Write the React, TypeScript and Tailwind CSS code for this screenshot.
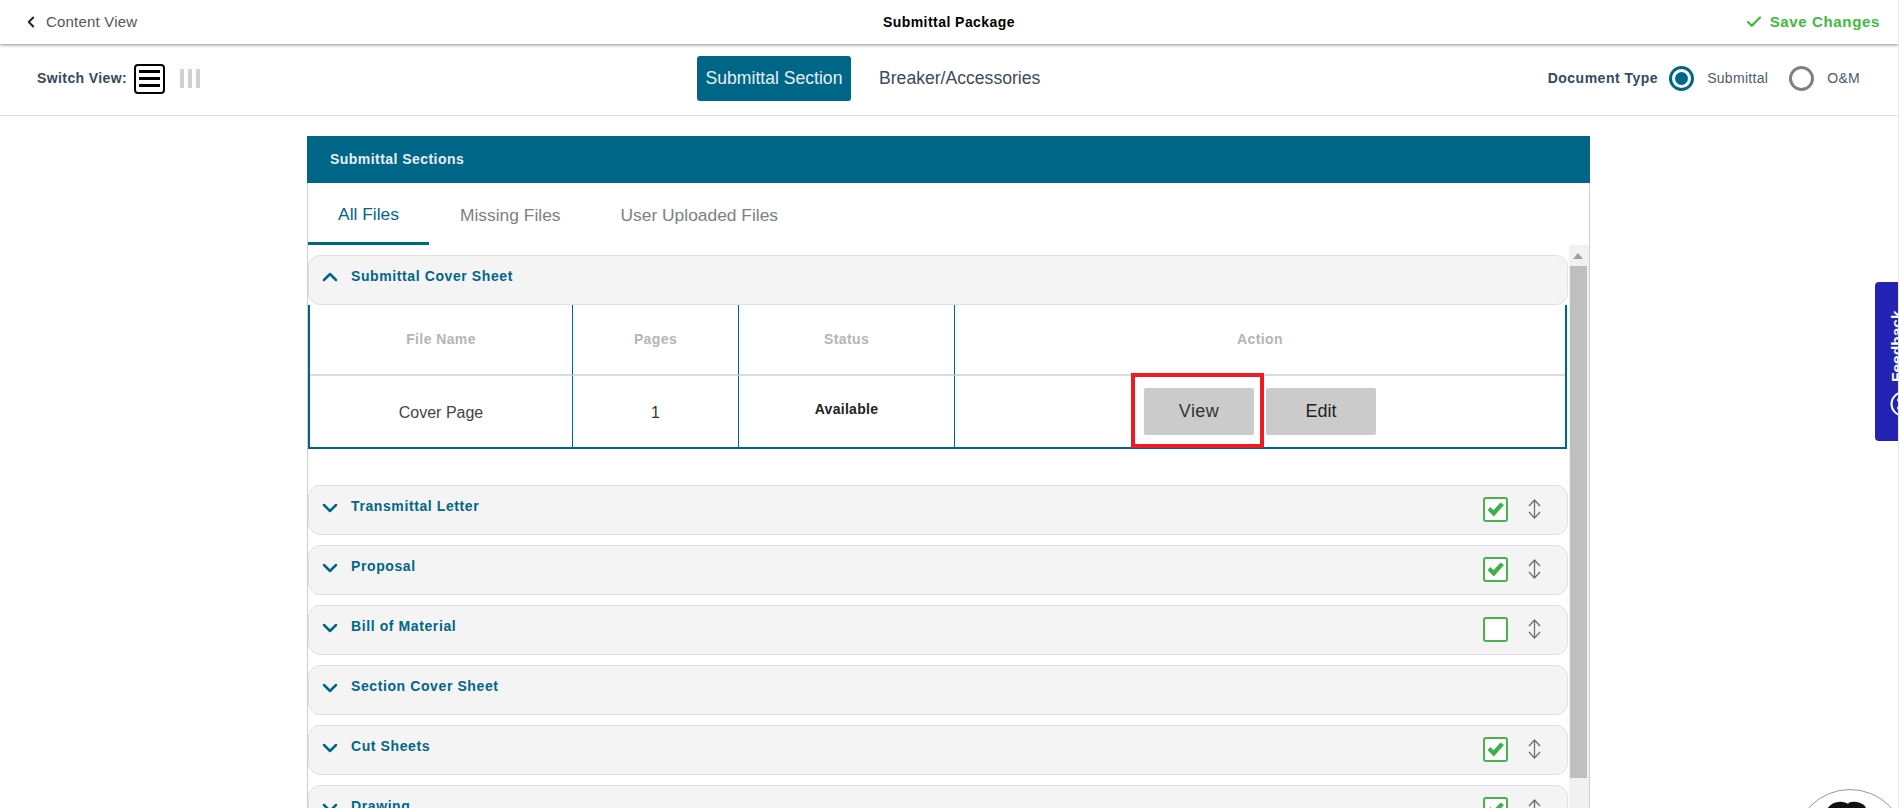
import React from "react";
import { ChevronDown, ChevronLeft, ChevronUp, Check } from "lucide-react";

const sections = [
  { id: 1, title: "Transmittal Letter", checked: true, controls: true },
  { id: 2, title: "Proposal", checked: true, controls: true },
  { id: 3, title: "Bill of Material", checked: false, controls: true },
  { id: 4, title: "Section Cover Sheet", checked: false, controls: false },
  { id: 5, title: "Cut Sheets", checked: true, controls: true },
  { id: 6, title: "Drawing", checked: true, controls: true },
];

const SortIcon = () => (
  <svg className="-mt-[2px]" width="13" height="20" viewBox="0 0 13 20" fill="none" stroke="#6f6f6f" strokeWidth="1.3">
    <path d="M6.5 2v16M1 7l5.5-6L12 7M1 13l5.5 6 5.5-6" />
  </svg>
);

const CheckBox = ({ checked }: { checked: boolean }) => (
  <span className="flex h-[25px] w-[25px] items-center justify-center rounded-[3px] border-2 border-[#4caf50] bg-white">
    {checked && (
      <svg width="18" height="15" viewBox="0 0 18 15">
        <path d="M0.5 8l3-3 3 3.2L13.5 0.5 17 3 6.8 14.5z" fill="#3fb14b" />
      </svg>
    )}
  </span>
);

const SectionRow = ({ title, checked, controls }: { title: string; checked: boolean; controls: boolean }) => (
  <div className="flex h-[50px] shrink-0 items-start rounded-[12px] border border-[#e0e0e0] bg-[#f4f4f4] pr-[26px] pl-[9px]">
    <ChevronDown size={24} strokeWidth={2.5} className="mt-[10px] text-[#006687]" />
    <span className="mt-[10px] ml-[9px] text-[14px] font-bold tracking-[0.6px] text-[#006687]">{title}</span>
    {controls && (
      <div className="mt-[11px] ml-auto flex items-center gap-[20px]">
        <CheckBox checked={checked} />
        <SortIcon />
      </div>
    )}
  </div>
);

export default function App() {
  return (
    <div className="relative h-[808px] overflow-hidden border-r border-[#e6e6e6] bg-white font-['Liberation_Sans',Arial,sans-serif]">
      <header className="relative z-10 grid h-[44px] grid-cols-3 items-center bg-white pr-[18px] pl-[22px] shadow-[0_1px_3px_rgba(0,0,0,0.45)]">
        <div className="flex items-center gap-[6px] text-[15px] tracking-[0.2px] text-[#555]">
          <ChevronLeft size={18} strokeWidth={2.6} className="text-[#222]" />
          Content View
        </div>
        <div className="pr-[4px] text-center text-[14px] font-bold tracking-[0.45px] text-black">Submittal Package</div>
        <div className="flex items-center justify-end gap-[7px] text-[15px] font-bold tracking-[0.65px] text-[#3dbb3d]">
          <Check size={18} strokeWidth={3} />
          Save Changes
        </div>
      </header>

      <div className="flex h-[72px] items-center border-b border-[#e0e0e0] pr-[38px] pb-[2px] pl-[37px]">
        <div className="flex w-[660px] items-center">
          <span className="text-[14px] font-bold tracking-[0.4px] text-[#34495e]">Switch View:</span>
          <span className="ml-[7px] flex h-[30px] w-[31px] flex-col justify-center gap-[4px] rounded-[4px] border-2 border-black px-[3px]">
            <span className="h-[3px] bg-black" />
            <span className="h-[3px] bg-black" />
            <span className="h-[3px] bg-black" />
          </span>
          <span className="ml-[15px] flex h-[19px] gap-[4px]">
            <span className="w-[4px] bg-[#d2d2d2]" />
            <span className="w-[4px] bg-[#d2d2d2]" />
            <span className="w-[4px] bg-[#d2d2d2]" />
          </span>
        </div>
        <div className="flex items-center gap-[28px]">
          <span className="flex h-[45px] w-[154px] items-center justify-center rounded-[3px] bg-[#006687] text-[17.6px] text-[#e6f0f4]">
            Submittal Section
          </span>
          <span className="text-[17.6px] text-[#3c4a5a]">Breaker/Accessories</span>
        </div>
        <div className="ml-auto flex items-center text-[14px] tracking-[0.3px] text-[#4d5b6a]">
          <span className="text-[14px] font-bold tracking-[0.5px] text-[#34495e]">Document Type</span>
          <span className="mr-[13px] ml-[11px] flex h-[25px] w-[25px] items-center justify-center rounded-full border-[3px] border-[#006687]">
            <span className="h-[13px] w-[13px] rounded-full bg-[#006687]" />
          </span>
          Submittal
          <span className="mr-[13px] ml-[21px] h-[25px] w-[25px] rounded-full border-[3px] border-[#808080]" />
          O&M
        </div>
      </div>

      <main className="ml-[307px] mt-[20px] w-[1283px]">
        <div className="flex h-[47px] items-center bg-[#006687] pl-[23px] text-[14px] font-bold tracking-[0.45px] text-[#e6f0f4]">
          Submittal Sections
        </div>
        <div className="border-x border-[#cfcfcf]">
          <nav className="flex h-[62px] pt-[1px] text-[17.4px] text-[#808080]">
            <span className="flex w-[121px] items-center justify-center border-b-[3px] border-[#006687] pt-[3px] text-[#006687]">
              All Files
            </span>
            <span className="ml-[31px] flex items-center pt-[2px]">Missing Files</span>
            <span className="ml-[60px] flex items-center pt-[2px]">User Uploaded Files</span>
          </nav>
          <div className="flex h-[573px]">
            <div className="flex w-[1261px] shrink-0 flex-col pt-[10px] pr-[1px]">
              <div className="flex h-[50px] shrink-0 items-start rounded-[12px] border border-[#e0e0e0] bg-[#f4f4f4] pl-[9px]">
                <ChevronUp size={24} strokeWidth={2.5} className="mt-[9px] text-[#006687]" />
                <span className="mt-[10px] ml-[9px] text-[14px] font-bold tracking-[0.6px] text-[#006687]">Submittal Cover Sheet</span>
              </div>
              <div className="mr-[1px] grid grid-cols-[263px_166px_216px_1fr] border-x-2 border-b-2 border-[#006687] text-center">
                <div className="flex h-[71px] items-center justify-center border-r border-b-2 border-[#006687] border-b-[#dcdcdc] text-[14px] font-bold tracking-[0.4px] text-[#b5b5b5]">File Name</div>
                <div className="flex h-[71px] items-center justify-center border-r border-b-2 border-[#006687] border-b-[#dcdcdc] text-[14px] font-bold tracking-[0.4px] text-[#b5b5b5]">Pages</div>
                <div className="flex h-[71px] items-center justify-center border-r border-b-2 border-[#006687] border-b-[#dcdcdc] text-[14px] font-bold tracking-[0.4px] text-[#b5b5b5]">Status</div>
                <div className="flex h-[71px] items-center justify-center border-b-2 border-b-[#dcdcdc] text-[14px] font-bold tracking-[0.4px] text-[#b5b5b5]">Action</div>
                <div className="flex h-[71px] items-center justify-center border-r border-[#006687] pt-[2px] text-[16px] text-[#444]">Cover Page</div>
                <div className="flex h-[71px] items-center justify-center border-r border-[#006687] pt-[2px] text-[16px] text-[#333]">1</div>
                <div className="flex h-[71px] items-center justify-center border-r border-[#006687] pb-[5px] text-[14px] font-bold tracking-[0.3px] text-[#222]">Available</div>
                <div className="relative flex h-[71px] items-center gap-[12px] pl-[189px] text-[18px] text-[#333]">
                  <span className="flex h-[47px] w-[110px] items-center justify-center rounded-[2px] bg-[#cbcbcb] tracking-[0.4px]">View</span>
                  <span className="flex h-[47px] w-[110px] items-center justify-center rounded-[2px] bg-[#cbcbcb] text-[#222]">Edit</span>
                  <span className="absolute top-[-3px] left-[176px] h-[75px] w-[133px] border-[4px] border-[#ed1c24]" />
                </div>
              </div>
              <div className="mt-[36px] flex flex-col gap-[10px]">
                {sections.map((s) => (
                  <SectionRow key={s.id} title={s.title} checked={s.checked} controls={s.controls} />
                ))}
              </div>
            </div>
            <div className="relative w-[20px] shrink-0 bg-[#f1f1f1]">
              <span className="absolute top-[8px] left-[4px] h-0 w-0 border-x-[5px] border-b-[6px] border-x-transparent border-b-[#a0a0a0]" />
              <span className="absolute top-[21px] left-[1px] h-[512px] w-[17px] bg-[#bfbfbf]" />
            </div>
          </div>
        </div>
      </main>

      <div className="absolute top-[282px] left-[1875px] h-[159px] w-[23px] overflow-hidden rounded-l-[4px] bg-[#2424b4]">
        <span className="absolute top-[31px] left-[12px] flex h-[66px] w-[20px] rotate-180 items-center justify-center text-[15.5px] font-bold text-white [writing-mode:vertical-rl]">
          Feedback
        </span>
        <svg className="absolute top-[109px] left-[15px]" width="26" height="26" viewBox="0 0 26 26" fill="none" stroke="white" strokeWidth="2">
          <circle cx="13" cy="13" r="11.5" />
          <circle cx="9" cy="9" r="1" fill="white" />
          <circle cx="9" cy="17" r="1" fill="white" />
        </svg>
      </div>

      <svg className="absolute top-[788px] left-[1794px]" width="112" height="112" viewBox="0 0 112 112">
        <circle cx="56" cy="57" r="55.5" fill="white" stroke="#999" />
        <path d="M31 25c3-8 10-12 17-11 3 0 5 1 6 2 1-2 3-2 4-2 4-1 9 1 12 3 2 2 3 5 3 8v10H31z" fill="#111" />
      </svg>
    </div>
  );
}
